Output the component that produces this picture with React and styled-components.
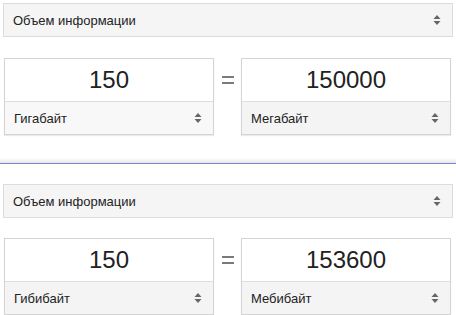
import styled, { createGlobalStyle } from "styled-components";

const GlobalStyle = createGlobalStyle`
  body {
    margin: 0;
    background: #fff;
    font-family: "Liberation Sans", Arial, sans-serif;
    color: #222;
  }
`;

const Page = styled.div`
  width: 456px;
  padding-top: 3px;
`;

const Section = styled.div`
  padding: 0 3px;
`;

const SelectBar = styled.div`
  display: flex;
  align-items: center;
  justify-content: space-between;
  height: 32px;
  border: 1px solid #dcdcdc;
  background: #f5f5f5;
  padding: 0 11px 0 9px;
  font-size: 13px;
`;

const Row = styled.div`
  display: flex;
  align-items: flex-start;
  margin-top: ${(p) => p.$gap}px;
  padding-left: 1px;
`;

const Box = styled.div`
  width: 208px;
  border: 1px solid #d4d4d4;
  box-shadow: 0 1px 1px rgba(0, 0, 0, 0.08);
  background: #fff;
`;

const Value = styled.div`
  height: 42px;
  display: flex;
  align-items: center;
  justify-content: center;
  font-size: 24px;
  color: #222;
  border-bottom: 1px solid #dedede;
`;

const UnitSelect = styled.div`
  height: 32px;
  display: flex;
  align-items: center;
  justify-content: space-between;
  padding: 0 11px 0 9px;
  background: ${(p) => (p.$light ? "#f8f8f8" : "#f4f4f4")};
  font-size: 13px;
`;

const Equals = styled.div`
  width: 27px;
  height: 43px;
  display: flex;
  flex-direction: column;
  align-items: center;
  justify-content: center;
  gap: 4px;
  &::before,
  &::after {
    content: "";
    width: 12px;
    height: 2px;
    background: #7a7a7a;
  }
`;

const Divider = styled.div`
  margin-top: 23px;
  height: 5px;
  background: linear-gradient(to bottom, #fff, #e6e6e6);
  border-bottom: 1px solid #7c84dc;
  margin-bottom: 20px;
`;

const Arrows = () => (
  <svg width="8" height="12" viewBox="0 0 8 12">
    <path d="M4 1 L7.5 5 L0.5 5 Z" fill="#666" />
    <path d="M4 11 L7.5 7 L0.5 7 Z" fill="#666" />
  </svg>
);

function Converter({ from, to, fromUnit, toUnit, light, gap }) {
  return (
    <Row $gap={gap}>
      <Box>
        <Value>{from}</Value>
        <UnitSelect $light={light}>
          {fromUnit}
          <Arrows />
        </UnitSelect>
      </Box>
      <Equals />
      <Box>
        <Value>{to}</Value>
        <UnitSelect>
          {toUnit}
          <Arrows />
        </UnitSelect>
      </Box>
    </Row>
  );
}

export default function App() {
  return (
    <Page>
      <GlobalStyle />
      <Section>
        <SelectBar>
          Объем информации
          <Arrows />
        </SelectBar>
        <Converter
          gap={21}
          from="150"
          to="150000"
          fromUnit="Гигабайт"
          toUnit="Мегабайт"
          light
        />
      </Section>
      <Divider />
      <Section>
        <SelectBar>
          Объем информации
          <Arrows />
        </SelectBar>
        <Converter
          gap={20}
          from="150"
          to="153600"
          fromUnit="Гибибайт"
          toUnit="Мебибайт"
        />
      </Section>
    </Page>
  );
}
